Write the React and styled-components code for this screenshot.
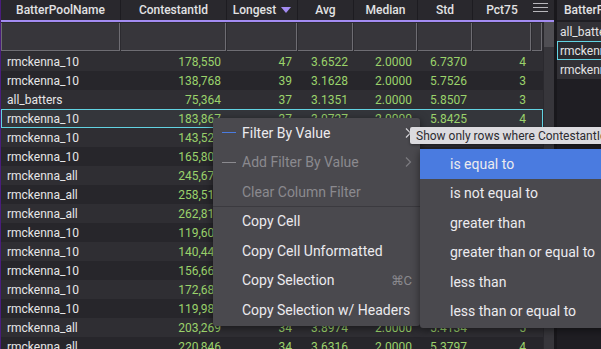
import React from 'react'
import styled, { createGlobalStyle } from 'styled-components'

const GlobalStyle = createGlobalStyle`
  html, body {
    margin: 0;
    padding: 0;
    background: #1b1a1f;
  }
  * {
    box-sizing: border-box;
  }
`

const FONT = `'Roboto', 'Noto Sans', sans-serif`
const COLS = [120, 106, 71, 56, 64, 55, 59, 11]
const GRID_COLS = COLS.map((w) => `${w}px`).join(' ')

const ROWS = [
  ['rmckenna_10', '178,550', '47', '3.6522', '2.0000', '6.7370', '4'],
  ['rmckenna_10', '138,768', '39', '3.1628', '2.0000', '5.7526', '3'],
  ['all_batters', '75,364', '37', '3.1351', '2.0000', '5.8507', '3'],
  ['rmckenna_10', '183,867', '37', '3.0727', '2.0000', '5.8425', '4'],
  ['rmckenna_10', '143,521', '36', '3.0412', '2.0000', '5.6120', '4'],
  ['rmckenna_10', '165,803', '36', '3.3901', '2.0000', '5.9012', '4'],
  ['rmckenna_all', '245,672', '36', '3.6213', '2.0000', '5.7420', '4'],
  ['rmckenna_all', '258,514', '35', '3.5178', '2.0000', '5.6388', '4'],
  ['rmckenna_all', '262,816', '35', '3.4496', '2.0000', '5.5012', '4'],
  ['rmckenna_10', '119,605', '35', '3.2744', '2.0000', '5.4871', '4'],
  ['rmckenna_10', '140,448', '35', '3.1906', '2.0000', '5.5503', '3'],
  ['rmckenna_10', '156,663', '34', '3.2288', '2.0000', '5.4620', '4'],
  ['rmckenna_10', '172,684', '34', '3.3015', '2.0000', '5.3981', '4'],
  ['rmckenna_10', '119,983', '34', '3.0869', '2.0000', '5.4402', '4'],
  ['rmckenna_all', '203,269', '34', '3.8974', '2.0000', '5.4134', '5'],
  ['rmckenna_all', '220,846', '34', '3.6316', '2.0000', '5.3797', '4'],
]

const HEADERS = ['BatterPoolName', 'ContestantId', 'Longest', 'Avg', 'Median', 'Std', 'Pct75']

const Page = styled.div`
  position: relative;
  width: 601px;
  height: 349px;
  overflow: hidden;
  display: flex;
  background: #1b1a1f;
  font-family: ${FONT};
  font-size: 12px;
  color: #e4e4e6;
`

const GridPanel = styled.div`
  width: 554px;
  flex-shrink: 0;
  display: flex;
  flex-direction: column;
  border-left: 1px solid #4a1d7c;
  background: #222126;
`

const HeaderRow = styled.div`
  height: 20px;
  flex-shrink: 0;
  display: grid;
  grid-template-columns: ${GRID_COLS} 11px;
  background: #29282d;
  border-bottom: 2px solid #a38cf2;
  box-sizing: content-box;
`

const HeaderCell = styled.div`
  display: flex;
  align-items: center;
  justify-content: center;
  gap: 5px;
  font-weight: 500;
  color: #e2e2e4;
  border-right: 1px solid ${(p) => (p.$last ? 'transparent' : '#1d1c21')};
  white-space: nowrap;
`

const SortArrow = styled.span`
  width: 0;
  height: 0;
  border-left: 5px solid transparent;
  border-right: 5px solid transparent;
  border-top: 6px solid #a48cf2;
`

const MenuIcon = styled.div`
  grid-column: span 2;
  display: flex;
  flex-direction: column;
  gap: 3px;
  padding: 3px 0 0 1px;
  span {
    display: block;
    width: 15px;
    height: 1px;
    background: #b8b7bc;
  }
`

const Body = styled.div`
  flex: 1;
  display: flex;
  min-height: 0;
  overflow: hidden;
`

const Table = styled.div`
  width: 542px;
  display: flex;
  flex-direction: column;
`

const FilterRow = styled.div`
  height: 30px;
  flex-shrink: 0;
  display: grid;
  grid-template-columns: ${GRID_COLS};
  background: #2c2b30;
`

const FilterCell = styled.div`
  margin: 1px 1px 1px 0;
  background: #37363b;
  border: 1px solid #6e6d73;
  border-top: none;
  border-left: ${(p) => (p.$first ? '1px solid #6e6d73' : 'none')};
`

const DataRow = styled.div`
  height: 19px;
  flex-shrink: 0;
  display: grid;
  grid-template-columns: ${GRID_COLS};
  align-items: center;
  background: ${(p) => (p.$selected ? '#34363b' : p.$odd ? '#27262b' : '#2f2e33')};
  outline: ${(p) => (p.$selected ? '1px solid #62d3e2' : 'none')};
  outline-offset: -1px;
`

const TextCell = styled.div`
  padding-left: 6px;
  color: #e6e6e8;
  white-space: nowrap;
  overflow: hidden;
`

const NumCell = styled.div`
  padding-right: 6px;
  text-align: right;
  color: #9bd36b;
  white-space: nowrap;
`

const ScrollTrack = styled.div`
  width: 11px;
  background: #37363b;
  border-left: 1px solid #2a292e;
`

const ScrollThumb = styled.div`
  height: 25px;
  background: #4f4e53;
`

const Gap = styled.div`
  width: 3px;
  flex-shrink: 0;
  background: #19181c;
`

const SidePanel = styled.div`
  flex: 1;
  display: flex;
  flex-direction: column;
  background: #1f1e23;
`

const SideHeader = styled.div`
  height: 20px;
  padding-left: 7px;
  display: flex;
  align-items: center;
  font-weight: 500;
  background: #29282d;
  border-bottom: 2px solid #1f1e23;
  box-sizing: content-box;
  white-space: nowrap;
  color: #e2e2e4;
`

const SideRow = styled.div`
  height: 19px;
  flex-shrink: 0;
  padding-left: 3px;
  display: flex;
  align-items: center;
  white-space: nowrap;
  background: ${(p) => (p.$odd ? '#2a292e' : '#323136')};
  outline: ${(p) => (p.$selected ? '1px solid #62d3e2' : 'none')};
  outline-offset: -1px;
`

const Menu = styled.div`
  position: absolute;
  left: 213px;
  top: 118px;
  width: 207px;
  padding: 0 0 1px;
  background: #4a494e;
  border-radius: 3px;
  box-shadow: 0 2px 8px rgba(0, 0, 0, 0.5);
  font-size: 14px;
`

const Item = styled.div`
  height: 29.5px;
  display: flex;
  align-items: center;
  padding: 0 8px 0 9px;
  color: ${(p) => (p.$disabled ? '#8b8a8f' : '#ecebee')};
  white-space: nowrap;
`

const ItemIcon = styled.span`
  width: 20px;
  flex-shrink: 0;
  display: flex;
  align-items: center;
  &::before {
    content: '';
    display: ${(p) => (p.$dash ? 'block' : 'none')};
    width: 14px;
    height: 1px;
    background: ${(p) => p.$dash};
  }
`

const ItemLabel = styled.span`
  flex: 1;
`

const Shortcut = styled.span`
  color: #8b8a8f;
  font-size: 13px;
`

const Chevron = styled.svg`
  width: 8px;
  height: 12px;
  fill: none;
  stroke: ${(p) => (p.$disabled ? '#7c7b80' : '#d6d5da')};
  stroke-width: 1.2;
`

const Separator = styled.div`
  height: 1px;
  margin: -1px 0 0;
  background: #3b3a3f;
`

const SubMenu = styled.div`
  position: absolute;
  left: 420px;
  top: 149px;
  width: 200px;
  padding-bottom: 2px;
  background: #4a494e;
  border-radius: 3px;
  box-shadow: 0 2px 8px rgba(0, 0, 0, 0.5);
  font-size: 14px;
`

const SubItem = styled.div`
  height: 29.5px;
  display: flex;
  align-items: center;
  padding-left: 30px;
  white-space: nowrap;
  color: #ecebee;
  background: ${(p) => (p.$active ? '#4a7be0' : 'transparent')};
`

const Tooltip = styled.div`
  position: absolute;
  left: 410px;
  top: 127px;
  height: 17px;
  padding: 0 6px;
  display: flex;
  align-items: center;
  background: #dcdbdf;
  color: #2c2b30;
  font-size: 12px;
  white-space: nowrap;
  border-radius: 2px;
  box-shadow: 0 1px 3px rgba(0, 0, 0, 0.4);
`

const ChevronIcon = ({ disabled }) => (
  <Chevron viewBox="0 0 8 12" $disabled={disabled}>
    <path d="M2 1.5 L6.5 6 L2 10.5" />
  </Chevron>
)

export default function App() {
  return (
    <Page>
      <GlobalStyle />
      <GridPanel>
        <HeaderRow>
          {HEADERS.map((h, i) => (
            <HeaderCell key={h} $last={i === HEADERS.length - 1}>
              {h}
              {h === 'Longest' && <SortArrow />}
            </HeaderCell>
          ))}
          <MenuIcon>
            <span />
            <span />
            <span />
          </MenuIcon>
        </HeaderRow>
        <Body>
          <Table>
            <FilterRow>
              {COLS.map((w, i) => (
                <FilterCell key={i} $first={i === 0} />
              ))}
            </FilterRow>
            {ROWS.map((r, i) => (
              <DataRow key={i} $odd={i % 2 === 1} $selected={i === 3}>
                <TextCell>{r[0]}</TextCell>
                {r.slice(1).map((v, j) => (
                  <NumCell key={j}>{v}</NumCell>
                ))}
              </DataRow>
            ))}
          </Table>
          <ScrollTrack>
            <ScrollThumb />
          </ScrollTrack>
        </Body>
      </GridPanel>
      <Gap />
      <SidePanel>
        <SideHeader>BatterPoolName</SideHeader>
        <SideRow>all_batters</SideRow>
        <SideRow $odd $selected>rmckenna_10</SideRow>
        <SideRow>rmckenna_10</SideRow>
      </SidePanel>

      <Menu>
        <Item>
          <ItemIcon $dash="#4a7be0" />
          <ItemLabel>Filter By Value</ItemLabel>
          <ChevronIcon />
        </Item>
        <Item $disabled>
          <ItemIcon $dash="#8b8a8f" />
          <ItemLabel>Add Filter By Value</ItemLabel>
          <ChevronIcon disabled />
        </Item>
        <Item $disabled>
          <ItemIcon />
          <ItemLabel>Clear Column Filter</ItemLabel>
        </Item>
        <Separator />
        <Item>
          <ItemIcon />
          <ItemLabel>Copy Cell</ItemLabel>
        </Item>
        <Item>
          <ItemIcon />
          <ItemLabel>Copy Cell Unformatted</ItemLabel>
        </Item>
        <Item>
          <ItemIcon />
          <ItemLabel>Copy Selection</ItemLabel>
          <Shortcut>⌘C</Shortcut>
        </Item>
        <Item>
          <ItemIcon />
          <ItemLabel>Copy Selection w/ Headers</ItemLabel>
        </Item>
      </Menu>

      <SubMenu>
        <SubItem $active>is equal to</SubItem>
        <SubItem>is not equal to</SubItem>
        <SubItem>greater than</SubItem>
        <SubItem>greater than or equal to</SubItem>
        <SubItem>less than</SubItem>
        <SubItem>less than or equal to</SubItem>
      </SubMenu>

      <Tooltip>Show only rows where ContestantId is equal to the value</Tooltip>
    </Page>
  )
}
